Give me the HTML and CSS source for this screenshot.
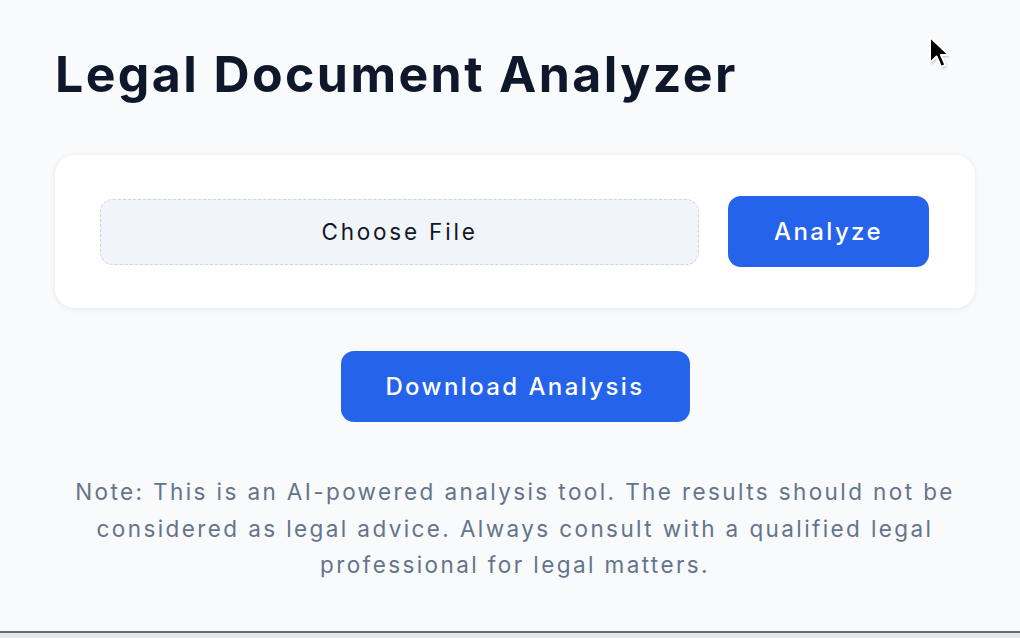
FILE: index.html
```html
<!DOCTYPE html>
<html lang="en">
<head>
<meta charset="utf-8">
<title>Legal Document Analyzer</title>
<link rel="stylesheet" href="styles.css">
</head>
<body>
<div class="page">
  <main class="container">
    <h1 class="title">Legal Document Analyzer</h1>
    <section class="card">
      <label class="file-drop">Choose File</label>
      <button class="btn btn-analyze">Analyze</button>
    </section>
    <div class="download-row">
      <button class="btn btn-download">Download Analysis</button>
    </div>
    <p class="note">Note: This is an AI-powered analysis tool. The results should not be considered as legal advice. Always consult with a qualified legal professional for legal matters.</p>
  </main>
</div>
<svg class="cursor" width="28" height="38" viewBox="0 0 28 38">
  <defs>
    <filter id="sh" x="-30%" y="-30%" width="160%" height="160%">
      <feGaussianBlur stdDeviation="1.2"/>
    </filter>
  </defs>
  <path d="M3 3 L3 29 L9.5 22.5 L14 33 L18.5 31 L14 21 L22 21 Z" fill="rgba(0,0,0,0.35)" transform="translate(1,1.5)" filter="url(#sh)"/>
  <path d="M3 3 L3 29 L9.5 22.5 L14 33 L18.5 31 L14 21 L22 21 Z" fill="#000" stroke="#fff" stroke-width="2" stroke-linejoin="round"/>
</svg>
</body>
</html>
```
FILE: styles.css
```css
* { box-sizing: border-box; }
html, body { margin: 0; padding: 0; }
body {
  width: 1020px;
  height: 638px;
  overflow: hidden;
  background: #e5e7eb;
  font-family: Inter, "Noto Sans", "Liberation Sans", sans-serif;
  position: relative;
}
.page {
  height: 633px;
  background: #f8fafc;
  border-bottom: 2px solid #6b6b6b;
}
.container {
  width: 920px;
  margin-left: 55px;
  padding-top: 43px;
}
.title {
  margin: 0;
  font-size: 50px;
  font-weight: 700;
  line-height: 62px;
  color: #0f172a;
  letter-spacing: 2.4px;
}
.card {
  margin-top: 50px;
  background: #fff;
  border-radius: 20px;
  box-shadow: 0 1px 6px rgba(15, 23, 42, 0.08);
  padding: 41px 46px 41px 45px;
  display: flex;
  align-items: center;
  gap: 29px;
}
.file-drop {
  flex: 0 0 599px;
  height: 66px;
  border: 1.5px dashed #cbd5e1;
  border-radius: 13px;
  background: #f1f5f9;
  display: flex;
  align-items: center;
  justify-content: center;
  font-size: 22.5px;
  color: #111827;
  letter-spacing: 2.8px;
}
.btn {
  border: none;
  background: #2563eb;
  color: #fff;
  font-family: inherit;
  font-size: 24px;
  font-weight: 500;
  border-radius: 13px;
  letter-spacing: 2.4px;
}
.btn-analyze {
  width: 201px;
  height: 71px;
}
.download-row {
  display: flex;
  justify-content: center;
  margin-top: 43px;
}
.btn-download {
  width: 349px;
  height: 71px;
}
.note {
  margin: 52px auto 0;
  width: 900px;
  text-align: center;
  font-size: 22.5px;
  line-height: 36.5px;
  color: #64748b;
  letter-spacing: 2.4px;
}
.cursor {
  position: absolute;
  left: 927px;
  top: 34px;
}
```
